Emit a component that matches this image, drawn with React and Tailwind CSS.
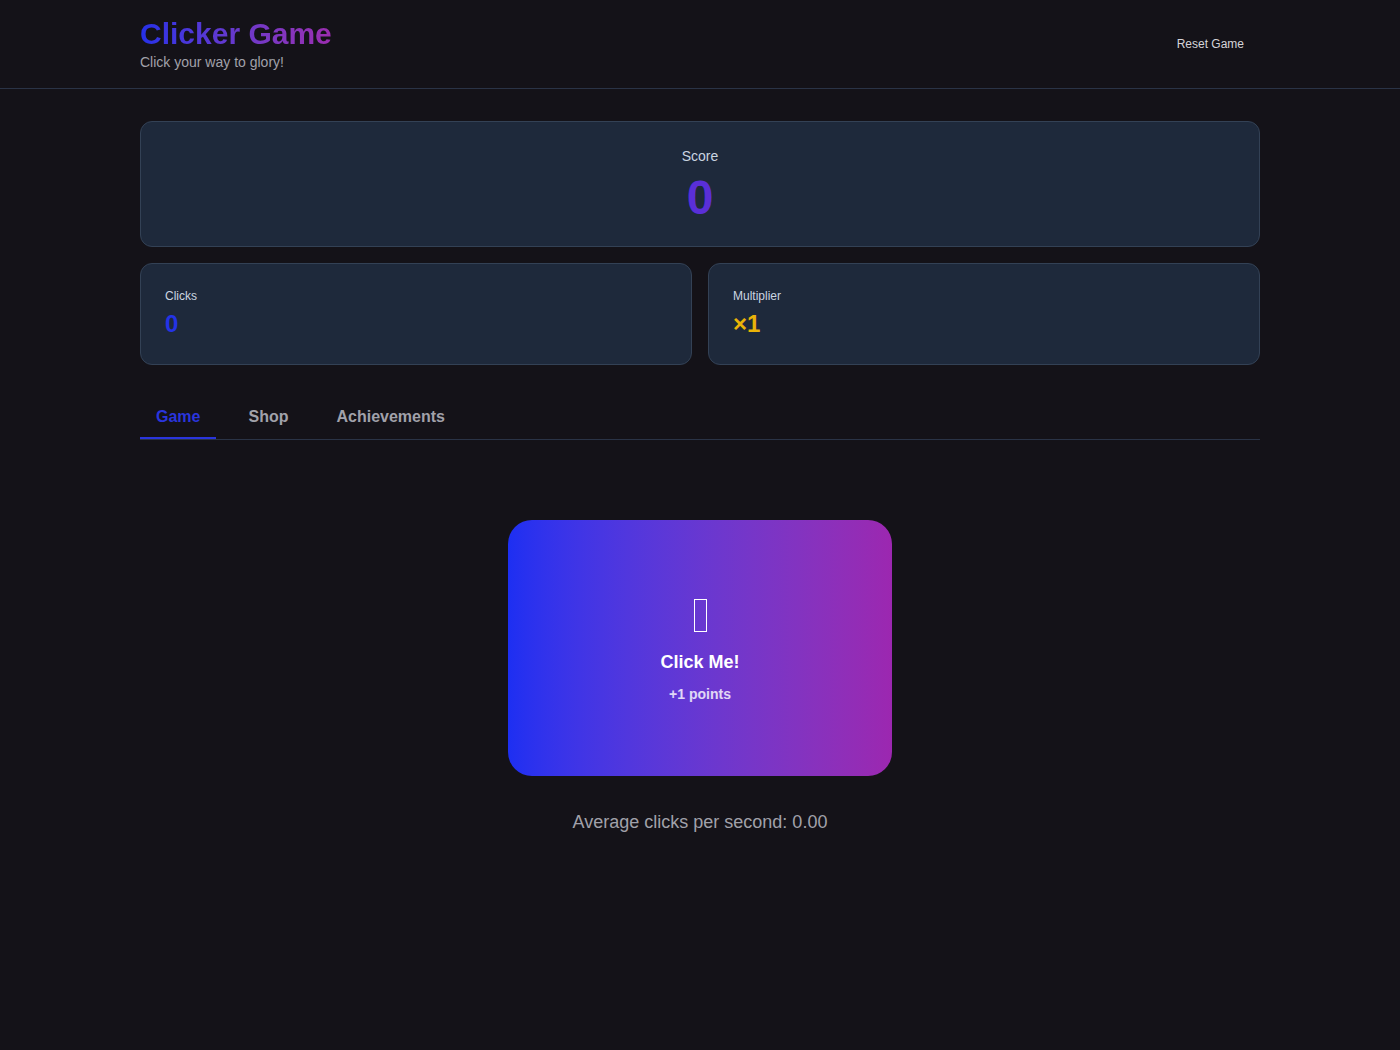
import React, { useState } from 'react';

function StatCard({ label, value, valueClass }) {
    return (
        <div className="bg-[#1e293b] rounded-xl border border-[#334155] p-6">
            <div className="text-xs text-[#cbd5e1]">{label}</div>
            <div className={`text-2xl font-bold mt-1 ${valueClass}`}>{value}</div>
        </div>
    );
}

export default function App() {
    const [tab, setTab] = useState('Game');
    const [score, setScore] = useState(0);
    const [clicks, setClicks] = useState(0);
    const multiplier = 1;

    const handleClick = () => {
        setScore(score + multiplier);
        setClicks(clicks + 1);
    };

    const reset = () => {
        setScore(0);
        setClicks(0);
    };

    return (
        <div className="min-h-screen bg-[#141218] text-white font-['Liberation_Sans',Arial,sans-serif]">

            {/* Header */}
            <div className="border-b border-[#2a3346]">
                <div className="max-w-6xl mx-auto px-4 py-4 flex items-center justify-between">
                    <div>
                        <h1 className="text-3xl font-bold bg-gradient-to-r from-[#2430e8] to-[#9c2cb0] bg-clip-text text-transparent w-fit">
                            Clicker Game
                        </h1>
                        <p className="text-sm text-[#a1a1aa]">Click your way to glory!</p>
                    </div>
                    <button onClick={reset} className="px-4 py-2 text-xs text-[#d4d4d8]">
                        Reset Game
                    </button>
                </div>
            </div>

            <div className="max-w-6xl mx-auto px-4">

                {/* Score */}
                <div className="mt-8 bg-[#1e293b] rounded-xl border border-[#334155] p-6 text-center">
                    <div className="text-sm text-[#cbd5e1]">Score</div>
                    <div className="text-5xl font-bold mt-2 text-[#5a2fd8]">{score}</div>
                </div>

                {/* Stats */}
                <div className="grid grid-cols-2 gap-4 mt-4">
                    <StatCard label="Clicks" value={clicks} valueClass="text-[#2433e6]" />
                    <StatCard label="Multiplier" value={`×${multiplier}`} valueClass="text-[#eab308]" />
                </div>

                {/* Tabs */}
                <div className="mt-8 flex gap-4 border-b border-[#2a3346]">
                    {['Game', 'Shop', 'Achievements'].map((t) => (
                        <button
                            key={t}
                            onClick={() => setTab(t)}
                            className={`px-4 py-2 text-base font-bold border-b-2 ${tab === t ? 'text-[#2a35dc] border-[#2a35dc]' : 'text-[#a1a1aa] border-transparent'}`}>
                            {t}
                        </button>
                    ))}
                </div>

                {/* Game */}
                {tab === 'Game' && (
                    <div className="mt-20 flex flex-col items-center">
                        <button
                            onClick={handleClick}
                            className="w-96 h-64 rounded-3xl bg-gradient-to-r from-[#1d2ff2] to-[#9c27b0] flex flex-col items-center justify-center">
                            {/* emoji placeholder box */}
                            <span className="h-10 flex items-end mb-4">
                                <span className="block w-[13px] h-[33px] border border-white"></span>
                            </span>
                            <span className="text-lg font-bold">Click Me!</span>
                            <span className="text-sm font-bold text-white/80 mt-2">+{multiplier} points</span>
                        </button>
                        <p className="mt-8 text-lg text-[#a1a1aa]">
                            Average clicks per second: 0.00
                        </p>
                    </div>
                )}
            </div>
        </div>
    );
}
